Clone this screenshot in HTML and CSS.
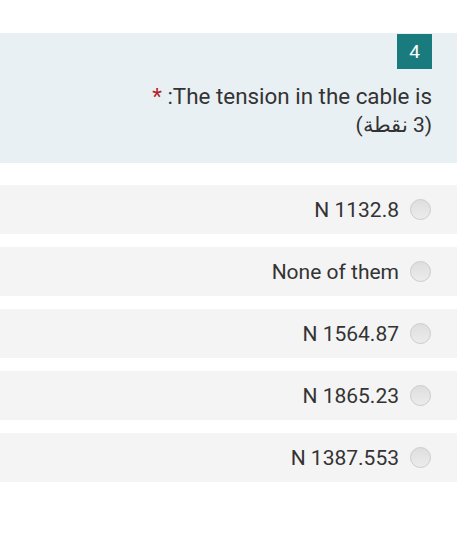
FILE: index.html
```html
<!DOCTYPE html>
<html lang="ar">
<head>
    <meta charset="UTF-8">
    <meta name="viewport" content="width=device-width, initial-scale=1.0">
    <title>Question 4</title>

    <link rel="stylesheet" href="styles.css">
</head>

<body>
    <section class="form">
        <div class="question">
            <div class="number">4</div>
            <div class="title"><span class="required">*</span> :The tension in the cable is</div>
            <div class="points" dir="rtl">(3 نقطة)</div>
        </div>

        <div class="choices">
            <label class="choice">
                <span class="text">N 1132.8</span>
                <span class="radio"></span>
            </label>
            <label class="choice">
                <span class="text">None of them</span>
                <span class="radio"></span>
            </label>
            <label class="choice">
                <span class="text">N 1564.87</span>
                <span class="radio"></span>
            </label>
            <label class="choice">
                <span class="text">N 1865.23</span>
                <span class="radio"></span>
            </label>
            <label class="choice">
                <span class="text">N 1387.553</span>
                <span class="radio"></span>
            </label>
        </div>
    </section>
</body>
</html>
```

FILE: styles.css
```css
body {
    margin: 0px;
    background: white;
    font-family: Roboto, "Noto Sans", sans-serif;
    color: #333333;
}
.form {
    width: 457px;
    padding-top: 33px;
}
.question {
    background-color: #e9f0f3;
    display: flex;
    flex-direction: column;
    align-items: flex-end;
    padding: 1px 25px 24px 0px;
}
.number {
    background-color: #1a7b7e;
    color: white;
    width: 35px;
    height: 35px;
    font-size: 19px;
    display: flex;
    align-items: center;
    justify-content: center;
}
.title {
    font-size: 22.4px;
    line-height: 28px;
    margin-top: 13px;
}
.required {
    color: #b3212b;
}
.points {
    font-size: 21px;
    line-height: 28px;
    margin-top: 1px;
}
.choices {
    display: flex;
    flex-direction: column;
    gap: 13px;
    padding-top: 22px;
}
.choice {
    background-color: #f4f4f4;
    height: 49px;
    display: flex;
    align-items: center;
    justify-content: flex-end;
    gap: 11px;
    padding-right: 26px;
    font-size: 21px;
}
.radio {
    width: 19px;
    height: 19px;
    border-radius: 50%;
    border: 1px solid #cbcbcb;
    background: linear-gradient(#dedede, #ececec);
}
```
